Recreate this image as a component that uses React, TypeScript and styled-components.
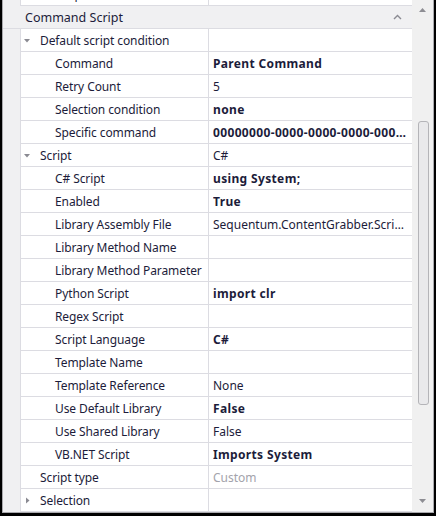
import React from 'react'
import styled, { createGlobalStyle } from 'styled-components'

const GlobalStyle = createGlobalStyle`
  html, body {
    margin: 0;
    padding: 0;
    background: #ffffff;
  }
  body {
    font-family: "Noto Sans", "Open Sans", sans-serif;
    font-size: 12px;
    color: #1c1c3a;
  }
`

const Frame = styled.div`
  box-sizing: border-box;
  width: 436px;
  height: 516px;
  border: 2px solid #000;
  border-top: none;
  border-bottom-width: 3px;
  display: flex;
`

const Inner = styled.div`
  flex: 1;
  display: flex;
  border: 1px solid #a9a9ad;
  border-top: none;
  overflow: hidden;
`

const Grid = styled.div`
  flex: 1;
  overflow: hidden;
  background: #fff;
`

const Rows = styled.div`
  margin-top: -17px;
`

const Row = styled.div`
  display: grid;
  grid-template-columns: 17px 188px 1fr;
  height: 23px;
`

const Gutter = styled.div`
  background: #f0f0f2;
`

const Cell = styled.div<{ $indent?: number }>`
  box-sizing: border-box;
  display: flex;
  align-items: center;
  min-width: 0;
  border-left: 1px solid #dcdce2;
  border-bottom: 1px solid #dcdce2;
  padding-left: ${({ $indent }) => $indent ?? 4}px;
  white-space: nowrap;
  overflow: hidden;
`

const Name = styled.span`
  white-space: nowrap;
  letter-spacing: -0.1px;
`

const Value = styled.span<{ $bold?: boolean; $muted?: boolean }>`
  font-weight: ${({ $bold }) => ($bold ? 700 : 400)};
  letter-spacing: ${({ $bold }) => ($bold ? '0.35px' : '0')};
  color: ${({ $muted }) => ($muted ? '#a3a3ab' : '#1c1c3a')};
  overflow: hidden;
  text-overflow: ellipsis;
  white-space: nowrap;
  padding-right: 4px;
`

const Toggle = styled.span`
  width: 16px;
  margin-left: 3px;
  display: flex;
  align-items: center;
`

const CategoryRow = styled.div`
  height: 23px;
  box-sizing: border-box;
  display: flex;
  align-items: center;
  justify-content: space-between;
  padding: 0 10px 0 22px;
  background: #f0f0f2;
  border-bottom: 1px solid #dcdce2;
  font-size: 12.5px;
`

const Scrollbar = styled.div`
  width: 21px;
  background: #f0f0f0;
  display: flex;
  flex-direction: column;
  align-items: center;
  padding: 8px 0 9px;
  box-sizing: border-box;
`

const Track = styled.div`
  flex: 1;
  width: 100%;
  display: flex;
  flex-direction: column;
  align-items: center;
  padding: 109px 0 94px;
  box-sizing: border-box;
`

const Thumb = styled.div`
  flex: 1;
  width: 9px;
  margin-left: 1px;
  border: 1px solid #b4b4b8;
  border-radius: 3px;
  background: #e9e9eb;
`

const Arrow = ({ up }: { up?: boolean }) => (
  <svg width="7" height="4" viewBox="0 0 7 4">
    <path d={up ? 'M0 4 L3.5 0 L7 4 Z' : 'M0 0 L3.5 4 L7 0 Z'} fill="#8d8d93" />
  </svg>
)

const Caret = ({ open }: { open: boolean }) => (
  <svg width="7" height="7" viewBox="0 0 7 7">
    {open ? <path d="M0 2 L6 2 L3 5.5 Z" fill="#8a8a92" /> : <path d="M2 0.5 L5.5 3.5 L2 6.5 Z" fill="#8a8a92" />}
  </svg>
)

type Prop = {
  name: string
  value?: string
  level: 1 | 2
  bold?: boolean
  muted?: boolean
  group?: 'open' | 'closed'
}

const props: Prop[] = [
  { name: 'Default script condition', level: 1, group: 'open' },
  { name: 'Command', value: 'Parent Command', level: 2, bold: true },
  { name: 'Retry Count', value: '5', level: 2 },
  { name: 'Selection condition', value: 'none', level: 2, bold: true },
  { name: 'Specific command', value: '00000000-0000-0000-0000-000000000000', level: 2, bold: true },
  { name: 'Script', value: 'C#', level: 1, group: 'open' },
  { name: 'C# Script', value: 'using System;', level: 2, bold: true },
  { name: 'Enabled', value: 'True', level: 2, bold: true },
  { name: 'Library Assembly File', value: 'Sequentum.ContentGrabber.Scripts.dll', level: 2 },
  { name: 'Library Method Name', level: 2 },
  { name: 'Library Method Parameter', level: 2 },
  { name: 'Python Script', value: 'import clr', level: 2, bold: true },
  { name: 'Regex Script', level: 2 },
  { name: 'Script Language', value: 'C#', level: 2, bold: true },
  { name: 'Template Name', level: 2 },
  { name: 'Template Reference', value: 'None', level: 2 },
  { name: 'Use Default Library', value: 'False', level: 2, bold: true },
  { name: 'Use Shared Library', value: 'False', level: 2 },
  { name: 'VB.NET Script', value: 'Imports System', level: 2, bold: true },
  { name: 'Script type', value: 'Custom', level: 1, muted: true },
  { name: 'Selection', level: 1, group: 'closed' },
]

function PropRow({ p }: { p: Prop }) {
  return (
    <Row>
      <Gutter />
      <Cell $indent={p.level === 1 ? 0 : 34}>
        {p.level === 1 && <Toggle>{p.group && <Caret open={p.group === 'open'} />}</Toggle>}
        <Name>{p.name}</Name>
      </Cell>
      <Cell>
        {p.value && (
          <Value $bold={p.bold} $muted={p.muted}>
            {p.value}
          </Value>
        )}
      </Cell>
    </Row>
  )
}

export default function App() {
  return (
    <>
      <GlobalStyle />
      <Frame>
        <Inner>
          <Grid>
            <Rows>
              <PropRow p={{ name: 'Description', level: 1 }} />
              <CategoryRow>
                <span>Command Script</span>
                <svg width="9" height="6" viewBox="0 0 9 6">
                  <path d="M1 5 L4.5 1.5 L8 5" stroke="#8a8a92" strokeWidth="1.4" fill="none" />
                </svg>
              </CategoryRow>
              {props.map((p) => (
                <PropRow key={p.name} p={p} />
              ))}
            </Rows>
          </Grid>
          <Scrollbar>
            <Arrow up />
            <Track>
              <Thumb />
            </Track>
            <Arrow />
          </Scrollbar>
        </Inner>
      </Frame>
    </>
  )
}
